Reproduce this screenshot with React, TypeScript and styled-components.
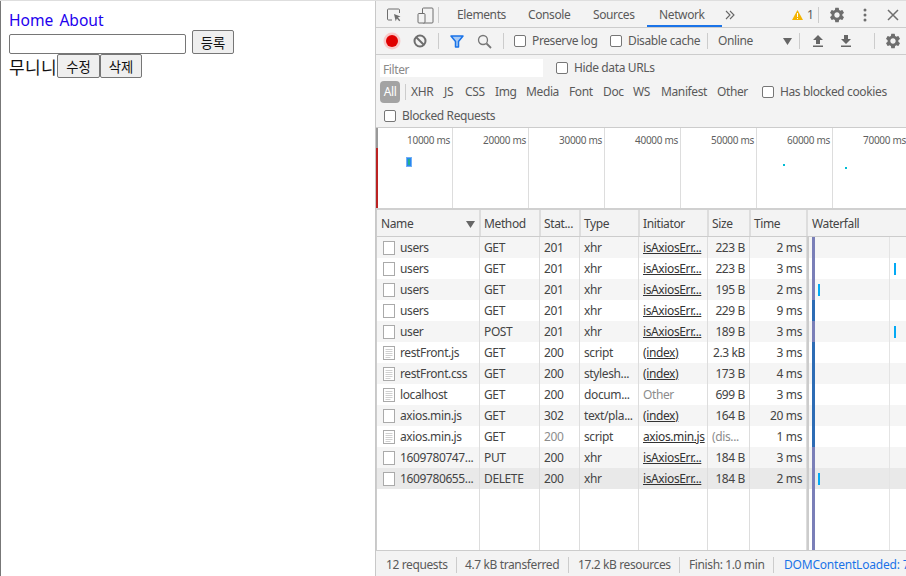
import React from "react";
import styled, { createGlobalStyle } from "styled-components";
import { MdSettings } from "react-icons/md";

const Global = createGlobalStyle`
  html, body { margin: 0; padding: 0; width: 906px; height: 576px; overflow: hidden; background: #fff; }
  #root { width: 906px; height: 576px; }
  * { box-sizing: border-box; }
`;

const Frame = styled.div`
  display: flex; width: 906px; height: 576px; border-top: 1px solid #dedede;
`;
const Page = styled.div`
  width: 376px; flex: none; border-left: 1px solid #777; border-right: 1px solid #c8c8c8;
  padding: 7px 8px 8px; font: 16px/1 "Noto Sans", "Noto Sans CJK KR", sans-serif; color: #111;
`;
const NavRow = styled.div`display: flex; gap: 6px; height: 22px; padding-top: 1px; align-items: center;`;
const NavLink = styled.a`color: #2200ee; font: 15.6px "Noto Sans", sans-serif;`;
const FormRow = styled.div`display: flex; align-items: flex-end; gap: 6px; height: 24px;`;
const TextBox = styled.input`
  width: 177px; height: 20px; border: 1px solid #767676; border-radius: 2px; padding: 0; background: #fff;
`;
const Btn = styled.button`
  height: 24px; width: ${(p: { $w: number }) => p.$w}px; padding: 0; border: 1px solid #767676; border-radius: 2px;
  background: #efefef; color: #111; font: 13.33px "Noto Sans CJK KR", sans-serif;
`;
const ItemRow = styled.div`display: flex; align-items: center; height: 24px;`;
const ItemName = styled.span`width: 48px; font: 17px "Noto Sans CJK KR", sans-serif; letter-spacing: 0.4px; white-space: nowrap;`;

const Dev = styled.div`
  flex: 1; min-width: 0; display: flex; flex-direction: column; background: #fff; overflow: hidden;
  font: 12px/16px "Noto Sans", sans-serif; color: #5a5a5a; letter-spacing: -0.38px;
`;
const Bar = styled.div`
  display: flex; align-items: center; flex: none; height: ${(p: { $h: number }) => p.$h}px; background: #f3f3f3;
  border-bottom: ${(p: { $line?: boolean }) => (p.$line ? "1px solid #ccc" : "none")}; white-space: nowrap; overflow: hidden;
`;
const TabBar = styled(Bar)`padding-top: 2px;`;
const Slot = styled.div`
  flex: none; display: flex; align-items: center; justify-content: ${(p: { $c?: boolean }) => (p.$c ? "center" : "flex-start")};
  width: ${(p: { $w: number }) => p.$w}px; height: 100%;
`;
const Tab = styled(Slot)`
  position: relative; color: #5a5a5a;
  &[data-active="true"]::after { content: ""; position: absolute; left: -12px; right: 3px; bottom: 0; height: 2px; background: #1a73e8; }
`;
const Sep = styled.div`flex: none; width: 1px; height: 16px; background: #ccc;`;
const Check = styled.span`
  flex: none; width: 12px; height: 12px; border: 1px solid #767676; border-radius: 2px; background: #fff;
`;
const CheckLabel = styled.div`display: flex; align-items: center; gap: 6px; flex: none; width: ${(p: { $w: number }) => p.$w}px;`;
const FilterInput = styled.div`
  flex: none; width: 163px; height: 18px; margin: 0 13px 0 4px; background: #fff; padding-left: 3px; color: #8a8a8a; line-height: 22px;
`;
const AllChip = styled.div`
  flex: none; width: 20px; height: 22px; margin-left: 4px; border-radius: 4px; background: #a3a3a3; color: #fff;
  display: flex; align-items: center; justify-content: center;
`;
const Overview = styled.div`
  flex: none; height: 82px; display: flex; background: #fff; padding-left: 1px; border-bottom: 2px solid #d0d0d0;
`;
const Strip = styled.div`
  flex: none; width: 2px; margin-left: -1px; background: linear-gradient(#999 0 20px, #b22 20px);
`;
const Tick = styled.div`
  position: relative; flex: none; width: ${(p: { $w: number }) => p.$w}px; border-right: 1px solid #ddd; text-align: right;
  font-size: 10px; line-height: 14px; padding: 5px 2px 0 0; letter-spacing: -0.3px; color: #5f5f5f;
`;
const Mark = styled.i`
  position: absolute; left: ${(p: { $x: number }) => p.$x}px; top: ${(p: { $y: number }) => p.$y}px;
  width: ${(p: { $s: number }) => p.$s}px; height: ${(p: { $t: number }) => p.$t}px; background: #00bcd4;
`;
const Blob = styled(Mark)`
  background: #2a86f0; border: 1px solid #6fb0f5;
  &::after { content: ""; position: absolute; left: 1px; top: 1px; width: 2px; bottom: 1px; background: #22b08c; }
`;

const cols = "103px 60px 40px 59px 69px 42px 57px 1fr";
const Table = styled.div`flex: 1; min-height: 0; display: flex; flex-direction: column; border-left: 1px solid #ccc;`;
const HeadRow = styled.div`
  flex: none; height: 27px; display: grid; grid-template-columns: ${cols}; background: #f3f3f3; border-bottom: 1px solid #ccc;
`;
const HeadCell = styled.div`
  display: flex; align-items: center; justify-content: space-between; padding: 2px 4px 0; border-right: 2px solid #ddd; color: #444; margin-right: -1px;
  &:last-child { border-right: 0; padding-left: 5px; }
`;
const Row = styled.div`
  flex: none; height: 21px; display: grid; grid-template-columns: ${cols};
  background: ${(p: { $bg: string }) => p.$bg};
`;
const Cell = styled.div`
  display: flex; align-items: center; justify-content: ${(p: { $end?: boolean }) => (p.$end ? "flex-end" : "flex-start")};
  padding: 0 4px; border-right: 1px solid #ddd; overflow: hidden; white-space: nowrap; color: ${(p: { $dim?: boolean }) => (p.$dim ? "#8c8c8c" : "#444")};
`;
const NameCell = styled(Cell)`gap: 5px; padding-left: 6px;`;
const InitLink = styled.span`text-decoration: underline; color: #333;`;
const Water = styled.div`
  position: relative; border-left: 2px solid #ccc;
  &::before { content: ""; position: absolute; left: 3px; top: 0; bottom: 0; width: 3px; background: ${(p: { $blue?: boolean }) => (p.$blue ? "#2d6cb5" : "#7a7fb8")}; }
  &::after { content: ""; position: absolute; left: 80px; top: 0; bottom: 0; width: 1px; background: #e4e4e4; }
`;
const WaterTick = styled.i`
  position: absolute; left: ${(p: { $x: number }) => p.$x}px; top: 5px; width: 2px; height: 12px; background: #03a9f4;
`;
const Filler = styled.div`flex: 1; display: grid; grid-template-columns: ${cols}; background: #fff;`;
const FillCell = styled.div`border-right: 1px solid #ddd;`;
const Status = styled(Bar)`border-top: 1px solid #ccc; padding: 3px 0 0 10px;`;
const StatusItem = styled.div`
  flex: none; width: ${(p: { $w: number }) => p.$w}px; color: #5a5a5a; display: flex; align-items: center; height: 16px;
  border-right: 1px solid #ccc;
  &:last-child { border-right: 0; color: #1a73e8; letter-spacing: -0.2px; }
`;
const Ico = styled.svg`flex: none; display: block;`;

const Gear = ({ s = 18 }: { s?: number }) => <MdSettings size={s} color="#6e6e6e" style={{ flex: "none" }} />;
const FileIcon = ({ doc }: { doc?: boolean }) => (
  <Ico width="12" height="14" viewBox="0 0 12 14">
    <rect x="0.5" y="0.5" width="11" height="13" fill="#fff" stroke="#aaa" />
    {doc && <path d="M2.5 3.5h7M2.5 5.5h7M2.5 7.5h7M2.5 9.5h7M2.5 11.5h5" stroke="#d0d0d0" strokeWidth="1" />}
  </Ico>
);

type R = [string, boolean, string, string, boolean, string, string, boolean, string, string, boolean, number?];
const rows: R[] = [
  ["users", false, "GET", "201", false, "xhr", "isAxiosErr...", true, "223 B", "2 ms", false],
  ["users", false, "GET", "201", false, "xhr", "isAxiosErr...", true, "223 B", "3 ms", false, 85],
  ["users", false, "GET", "201", false, "xhr", "isAxiosErr...", true, "195 B", "2 ms", false, 9],
  ["users", false, "GET", "201", false, "xhr", "isAxiosErr...", true, "229 B", "9 ms", true],
  ["user", false, "POST", "201", false, "xhr", "isAxiosErr...", true, "189 B", "3 ms", false, 85],
  ["restFront.js", true, "GET", "200", false, "script", "(index)", true, "2.3 kB", "3 ms", true],
  ["restFront.css", true, "GET", "200", false, "stylesh...", "(index)", true, "173 B", "4 ms", true],
  ["localhost", true, "GET", "200", false, "docum...", "Other", false, "699 B", "3 ms", true],
  ["axios.min.js", false, "GET", "302", false, "text/pla...", "(index)", true, "164 B", "20 ms", true],
  ["axios.min.js", true, "GET", "200", true, "script", "axios.min.js", true, "(dis...", "1 ms", true],
  ["1609780747...", false, "PUT", "200", false, "xhr", "isAxiosErr...", true, "184 B", "3 ms", false],
  ["1609780655...", false, "DELETE", "200", false, "xhr", "isAxiosErr...", true, "184 B", "2 ms", false, 9],
];

const ticks = ["10000 ms", "20000 ms", "30000 ms", "40000 ms", "50000 ms", "60000 ms", "70000 ms"];
const tickWidths = [75, 76, 76, 76, 76, 76, 76];

export default function App() {
  return (
    <>
      <Global />
      <Frame>
        <Page>
          <NavRow>
            <NavLink>Home</NavLink>
            <NavLink>About</NavLink>
          </NavRow>
          <FormRow>
            <TextBox />
            <Btn $w={42}>등록</Btn>
          </FormRow>
          <ItemRow>
            <ItemName>무니니</ItemName>
            <Btn $w={43}>수정</Btn>
            <Btn $w={42}>삭제</Btn>
          </ItemRow>
        </Page>
        <Dev>
          <TabBar $h={27} $line>
            <Slot $w={36} $c>
              <Ico width="16" height="16" viewBox="0 0 16 16" fill="none">
                <path d="M6 13H2.5a1 1 0 0 1-1-1V3a1 1 0 0 1 1-1h10a1 1 0 0 1 1 1v3" stroke="#6e6e6e" />
                <path d="M8 7l6.5 2.6-2.6 1 2.4 2.6-1 1-2.4-2.6-1.2 2.6z" fill="#6e6e6e" />
              </Ico>
            </Slot>
            <Slot $w={26} $c>
              <Ico width="17" height="17" viewBox="0 0 17 17" fill="none" stroke="#6e6e6e">
                <rect x="5.5" y="1" width="10.5" height="15" rx="1" />
                <rect x="1" y="6.5" width="7" height="9.5" rx="1" fill="#f3f3f3" />
              </Ico>
            </Slot>
            <Sep />
            <Slot $w={18} />
            <Tab $w={71}>Elements</Tab>
            <Tab $w={65}>Console</Tab>
            <Tab $w={66}>Sources</Tab>
            <Tab $w={66} data-active="true">Network</Tab>
            <Slot $w={67}>
              <Ico width="10" height="10" viewBox="0 0 10 10" fill="none" stroke="#666" strokeWidth="1.1">
                <path d="M1 1l4 4-4 4M5 1l4 4-4 4" />
              </Ico>
            </Slot>
            <Ico width="11" height="10" viewBox="0 0 11 10">
              <path d="M5.5 0L11 10H0z" fill="#f4b400" />
              <path d="M5 3h1v4H5zM5 8h1v1H5z" fill="#fff" />
            </Ico>
            <Slot $w={4} />
            <Slot $w={11}>1</Slot>
            <Sep />
            <Slot $w={36} $c><Gear s={18} /></Slot>
            <Slot $w={20} $c>
              <Ico width="4" height="14" viewBox="0 0 4 14" fill="#6e6e6e">
                <circle cx="2" cy="2" r="1.5" /><circle cx="2" cy="7" r="1.5" /><circle cx="2" cy="12" r="1.5" />
              </Ico>
            </Slot>
            <Slot $w={36} $c>
              <Ico width="12" height="12" viewBox="0 0 12 12" stroke="#6e6e6e" strokeWidth="1.5">
                <path d="M1 1l10 10M11 1L1 11" />
              </Ico>
            </Slot>
          </TabBar>
          <Bar $h={27} $line>
            <Slot $w={32} $c>
              <Ico width="18" height="18" viewBox="0 0 18 18">
                <circle cx="9" cy="9" r="8.5" fill="#f8c9c9" />
                <circle cx="9" cy="9" r="6" fill="#e00000" />
              </Ico>
            </Slot>
            <Slot $w={24} $c>
              <Ico width="14" height="14" viewBox="0 0 14 14" fill="none" stroke="#6e6e6e" strokeWidth="2">
                <circle cx="7" cy="7" r="5.5" /><path d="M3 3l8 8" />
              </Ico>
            </Slot>
            <Slot $w={6} />
            <Sep />
            <Slot $w={36} $c>
              <Ico width="14" height="13" viewBox="0 0 14 13">
                <path d="M1 1h12L8.5 6.5V12h-3V6.5z" fill="#a8cbf5" stroke="#1a73e8" strokeWidth="1.5" strokeLinejoin="round" />
              </Ico>
            </Slot>
            <Slot $w={18} $c>
              <Ico width="15" height="15" viewBox="0 0 15 15" fill="none" stroke="#777" strokeWidth="1.3">
                <circle cx="6" cy="6" r="4.5" /><path d="M9.5 9.5l4.5 4.5" strokeWidth="1.8" />
              </Ico>
            </Slot>
            <Slot $w={10} />
            <Sep />
            <Slot $w={10} />
            <CheckLabel $w={96}><Check />Preserve log</CheckLabel>
            <CheckLabel $w={97}><Check />Disable cache</CheckLabel>
            <Sep />
            <Slot $w={10} />
            <Slot $w={65}>Online</Slot>
            <Ico width="9" height="7" viewBox="0 0 9 7"><path d="M0 0h9L4.5 7z" fill="#666" /></Ico>
            <Slot $w={7} />
            <Sep />
            <Slot $w={36} $c>
              <Ico width="12" height="12" viewBox="0 0 12 12" fill="#666">
                <path d="M6 0l5 5H8v4H4V5H1zM1 10.5h10V12H1z" />
              </Ico>
            </Slot>
            <Slot $w={20} $c>
              <Ico width="12" height="12" viewBox="0 0 12 12" fill="#666">
                <path d="M4 0h4v4h3L6 9 1 4h3zM1 10.5h10V12H1z" />
              </Ico>
            </Slot>
            <Slot $w={18} />
            <Sep />
            <Slot $w={36} $c><Gear s={18} /></Slot>
          </Bar>
          <Bar $h={25}>
            <FilterInput>Filter</FilterInput>
            <CheckLabel $w={160}><Check />Hide data URLs</CheckLabel>
          </Bar>
          <Bar $h={24}>
            <AllChip>All</AllChip>
            <Slot $w={5} />
            <Sep />
            <Slot $w={5} />
            <Slot $w={33}>XHR</Slot>
            <Slot $w={21}>JS</Slot>
            <Slot $w={30}>CSS</Slot>
            <Slot $w={31}>Img</Slot>
            <Slot $w={43}>Media</Slot>
            <Slot $w={34}>Font</Slot>
            <Slot $w={30}>Doc</Slot>
            <Slot $w={28}>WS</Slot>
            <Slot $w={56}>Manifest</Slot>
            <Slot $w={45}>Other</Slot>
            <CheckLabel $w={130}><Check />Has blocked cookies</CheckLabel>
          </Bar>
          <Bar $h={24} $line>
            <Slot $w={8} />
            <CheckLabel $w={130}><Check />Blocked Requests</CheckLabel>
          </Bar>
          <Overview>
            <Strip />
            {ticks.map((t, i) => (
              <Tick key={t} $w={tickWidths[i]}>
                {t}
                {i === 0 && <Blob $x={28} $y={29} $s={6} $t={10} />}
                {i === 5 && <Mark $x={26} $y={36} $s={2} $t={2} />}
                {i === 6 && <Mark $x={12} $y={39} $s={2} $t={2} />}
              </Tick>
            ))}
          </Overview>
          <Table>
            <HeadRow>
              <HeadCell>
                Name
                <Ico width="9" height="7" viewBox="0 0 9 7"><path d="M0 0h9L4.5 7z" fill="#666" /></Ico>
              </HeadCell>
              <HeadCell>Method</HeadCell>
              <HeadCell>Stat...</HeadCell>
              <HeadCell>Type</HeadCell>
              <HeadCell>Initiator</HeadCell>
              <HeadCell>Size</HeadCell>
              <HeadCell>Time</HeadCell>
              <HeadCell>Waterfall</HeadCell>
            </HeadRow>
            {rows.map((r, i) => (
              <Row key={i} $bg={i === 11 ? "#e9e9e9" : i % 2 === 0 ? "#f5f5f5" : "#fff"}>
                <NameCell><FileIcon doc={r[1]} />{r[0]}</NameCell>
                <Cell>{r[2]}</Cell>
                <Cell $dim={r[4]}>{r[3]}</Cell>
                <Cell>{r[5]}</Cell>
                <Cell $dim={!r[7]}>{r[7] ? <InitLink>{r[6]}</InitLink> : r[6]}</Cell>
                <Cell $end={r[8] !== "(dis..."} $dim={r[8] === "(dis..."}>{r[8]}</Cell>
                <Cell $end>{r[9]}</Cell>
                <Water $blue={r[10]}>{r[11] !== undefined && <WaterTick $x={r[11]} />}</Water>
              </Row>
            ))}
            <Filler>
              <FillCell /><FillCell /><FillCell /><FillCell /><FillCell /><FillCell /><FillCell />
              <Water />
            </Filler>
          </Table>
          <Status $h={26}>
            <StatusItem $w={71}>12 requests</StatusItem>
            <Slot $w={8} />
            <StatusItem $w={104}>4.7 kB transferred</StatusItem>
            <Slot $w={9} />
            <StatusItem $w={102}>17.2 kB resources</StatusItem>
            <Slot $w={9} />
            <StatusItem $w={85}>Finish: 1.0 min</StatusItem>
            <Slot $w={10} />
            <StatusItem $w={140}>DOMContentLoaded: 783 ms</StatusItem>
          </Status>
        </Dev>
      </Frame>
    </>
  );
}
